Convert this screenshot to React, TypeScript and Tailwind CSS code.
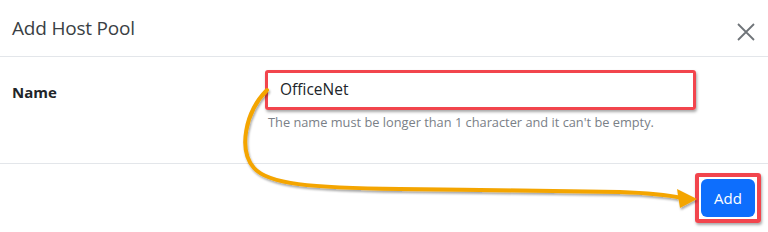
import React from 'react';

const AddHostPool = () => {
  return (
    <div className="relative w-[768px] h-[232px] overflow-hidden bg-white text-[#212529] font-['Open_Sans','Liberation_Sans',sans-serif]">
      {/* Header */}
      <div className="h-[57px] border-b border-[#e3e6ea] flex items-center justify-between pl-3 pr-[12px]">
        <h1 className="text-[19px] tracking-[-0.2px] text-[#3a3f44]">Add Host Pool</h1>
        <svg width="20" height="20" viewBox="0 0 20 20" className="mt-[8px]">
          <path d="M2 2 L18 18 M18 2 L2 18" stroke="#6f7479" strokeWidth="1.8" />
        </svg>
      </div>

      {/* Body */}
      <div className="h-[107px] border-b border-[#e3e6ea] flex pt-[13px]">
        <div className="w-[265px] pl-3 pt-[10px]">
          <label className="text-[15px] font-bold text-[#212529]">Name</label>
        </div>
        <div>
          <div className="w-[431px] h-[40px] border-[3px] border-[#f2454d] rounded-[3px] shadow-[1px_2px_3px_rgba(0,0,0,0.35)] flex items-center pl-[12px] text-[15.5px] text-[#212529]">
            OfficeNet
          </div>
          <p className="mt-[3px] pl-[3px] text-[12.8px] text-[#7a8087]">
            The name must be longer than 1 character and it can't be empty.
          </p>
        </div>
      </div>

      {/* Footer */}
      <div className="flex justify-end pt-[9px] pr-[7px]">
        <div className="border-[4px] border-[#f2454d] rounded-[3px] p-[2px] shadow-[1px_2px_3px_rgba(0,0,0,0.35)]">
          <button className="bg-[#0d6efd] text-white text-[15px] rounded-[6px] w-[54px] h-[38px]">Add</button>
        </div>
      </div>

      {/* Annotation arrow */}
      <svg className="absolute inset-0 pointer-events-none" width="768" height="232">
        <defs>
          <filter id="sh" x="-10%" y="-10%" width="120%" height="130%">
            <feDropShadow dx="1" dy="2" stdDeviation="1.2" floodColor="#000" floodOpacity="0.35" />
          </filter>
        </defs>
        <g filter="url(#sh)">
          <path
            d="M267 90 C 245 112, 238 150, 254 168 C 268 184, 310 188, 400 189 C 480 190, 580 191, 620 192 C 650 193, 668 195, 682 198"
            fill="none"
            stroke="#f4a500"
            strokeWidth="4"
            strokeLinecap="round"
          />
          <polygon points="697,199 677,189 680,208" fill="#f4a500" />
        </g>
      </svg>
    </div>
  );
};

export default function App() {
  return <AddHostPool />;
}
